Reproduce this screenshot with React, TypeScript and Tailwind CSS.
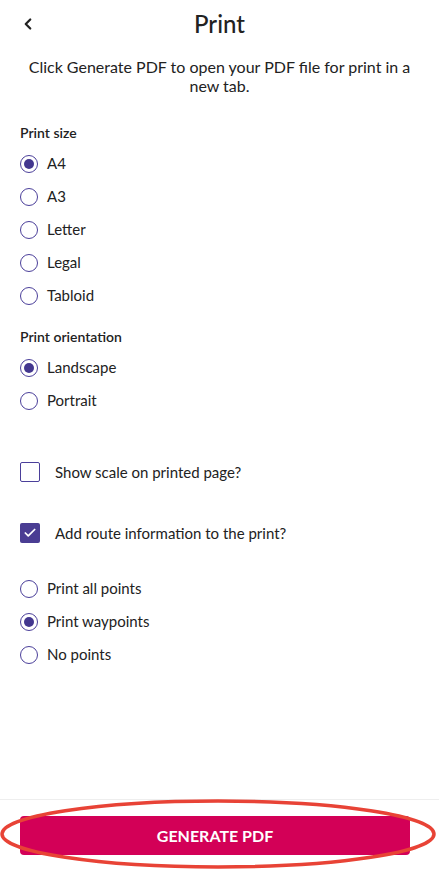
import { ChevronLeft, Check } from "lucide-react";

const sizes = ["A4", "A3", "Letter", "Legal", "Tabloid"];
const orientations = ["Landscape", "Portrait"];
const points = ["Print all points", "Print waypoints", "No points"];

function Radio({ label, checked }: { label: string; checked?: boolean }) {
  return (
    <div className="flex h-[33px] items-center gap-[9px]">
      <span className="flex h-[18px] w-[18px] items-center justify-center rounded-full border-[1.5px] border-[#4b3f9a]">
        {checked && <span className="h-[10px] w-[10px] rounded-full bg-[#43378f]" />}
      </span>
      <span className="text-[15px] text-[#222]">{label}</span>
    </div>
  );
}

function Box({ label, checked }: { label: string; checked?: boolean }) {
  return (
    <div className="flex items-center gap-[15px]">
      {checked ? (
        <span className="flex h-[20px] w-[20px] items-center justify-center rounded-[2px] bg-[#4a3d93]">
          <Check size={14} strokeWidth={3} className="text-white" />
        </span>
      ) : (
        <span className="h-[20px] w-[20px] rounded-[2px] border-[1.5px] border-[#4b3f9a]" />
      )}
      <span className="text-[15px] text-[#222]">{label}</span>
    </div>
  );
}

export default function App() {
  return (
    <div className="relative flex h-[870px] w-[439px] flex-col bg-white font-['Lato',sans-serif] text-[#222]">
      <div className="flex-1 px-5">
        <div className="relative flex h-[48px] items-center justify-center">
          <ChevronLeft size={18} strokeWidth={3} className="absolute left-[-1px] top-[15px]" />
          <h1 className="text-[24px] font-medium">Print</h1>
        </div>
        <p className="mt-[9px] text-center text-[16px] leading-[19px]">
          Click Generate PDF to open your PDF file for print in a new tab.
        </p>

        <h2 className="mt-[27px] text-[14px] font-semibold">Print size</h2>
        <div className="mt-[4px]">
          {sizes.map((s) => (
            <Radio key={s} label={s} checked={s === "A4"} />
          ))}
        </div>

        <h2 className="mt-[14px] text-[14px] font-semibold">Print orientation</h2>
        <div className="mt-[4px]">
          {orientations.map((s) => (
            <Radio key={s} label={s} checked={s === "Landscape"} />
          ))}
        </div>

        <div className="mt-[44px]">
          <Box label="Show scale on printed page?" />
        </div>
        <div className="mt-[38px]">
          <Box label="Add route information to the print?" checked />
        </div>

        <div className="mt-[28px]">
          {points.map((s) => (
            <Radio key={s} label={s} checked={s === "Print waypoints"} />
          ))}
        </div>
      </div>

      <div className="border-t border-[#eee] px-5 pb-[15px] pt-[16px]">
        <button className="h-[39px] w-[390px] rounded-[4px] bg-[#d30057] text-[16px] font-bold text-white">
          GENERATE PDF
        </button>
      </div>

      <svg className="pointer-events-none absolute left-0 top-[796px]" width="439" height="74">
        <ellipse cx="218" cy="38" rx="216" ry="33" fill="none" stroke="#e84336" strokeWidth="3.5" />
      </svg>
    </div>
  );
}
